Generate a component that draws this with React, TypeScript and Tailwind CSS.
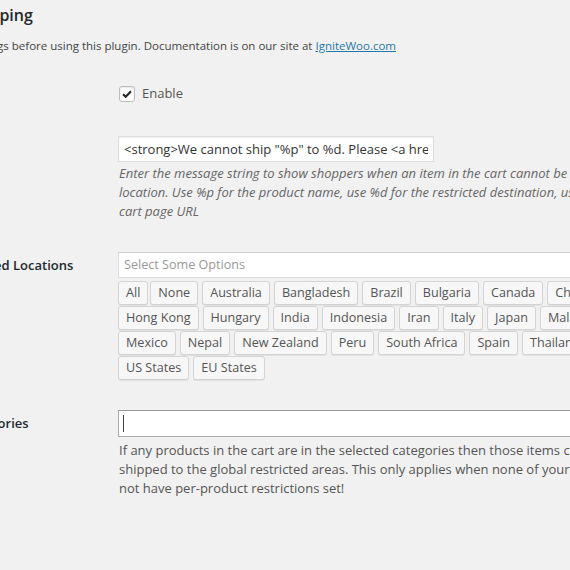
import { FC } from "react";

const rows: string[][] = [
  ["Australia", "Bangladesh", "Brazil", "Bulgaria", "Canada", "China", "France"],
  ["Hong Kong", "Hungary", "India", "Indonesia", "Iran", "Italy", "Japan", "Malaysia"],
  ["Mexico", "Nepal", "New Zealand", "Peru", "South Africa", "Spain", "Thailand", "Turkey"],
  ["US States", "EU States"],
];

const Chip: FC<{ label: string }> = ({ label }) => (
  <button className="h-[24px] shrink-0 px-[7px] border border-[#d4d4d4] rounded-[3px] bg-[#f7f7f7] shadow-[0_1px_0_#e0e0e0] text-[12.6px] leading-[22px] text-[#555] whitespace-nowrap">
    {label}
  </button>
);

const App: FC = () => {
  return (
    <div className="w-[570px] h-[570px] overflow-hidden bg-[#f1f1f1] font-['Open_Sans',sans-serif] text-[13px] text-[#444]">
      <h2 className="pt-[3px] -ml-[34px] text-[16px] leading-[24px] font-semibold text-[#23282d] whitespace-nowrap">
        Shipping
      </h2>
      <p className="mt-[9px] -ml-[121px] text-[11.5px] leading-[20px] whitespace-nowrap">
        Configure these settings before using this plugin. Documentation is on our site at{" "}
        <a className="text-[#1e78aa] underline">IgniteWoo.com</a>
      </p>

      {/* enable */}
      <div className="mt-[28px] flex h-[20px] items-center">
        <div className="w-[119px] shrink-0" />
        <label className="flex items-center gap-[7px] text-[13px] text-[#555]">
          <span className="flex h-[16px] w-[16px] items-center justify-center rounded-[3px] border border-[#bbb] bg-white shadow-[inset_0_1px_2px_rgba(0,0,0,0.1)]">
            <svg width="12" height="12" viewBox="0 0 12 12">
              <path d="M2 6.2 L4.7 8.8 L10 3.2" fill="none" stroke="#222" strokeWidth="2" />
            </svg>
          </span>
          Enable
        </label>
      </div>

      {/* message */}
      <div className="mt-[32px] flex">
        <div className="w-[118px] shrink-0" />
        <div>
          <input
            readOnly
            value={'<strong>We cannot ship "%p" to %d. Please <a href="%s">edit your cart</a></strong>'}
            className="block h-[26px] w-[316px] border border-[#ddd] bg-white px-[5px] text-[13px] text-[#333] shadow-[inset_0_1px_2px_rgba(0,0,0,0.07)] outline-none font-['Open_Sans',sans-serif]"
          />
          <div className="mt-[2px] ml-[1px] text-[13px] italic leading-[19px] text-[#666] whitespace-nowrap">
            <div>Enter the message string to show shoppers when an item in the cart cannot be shipped to their</div>
            <div>location. Use %p for the product name, use %d for the restricted destination, use %s for the</div>
            <div>cart page URL</div>
          </div>
        </div>
      </div>

      {/* locations */}
      <div className="mt-[31px] flex">
        <div className="w-[118px] shrink-0">
          <span className="block -ml-[54px] whitespace-nowrap text-[13px] font-semibold leading-[26px] text-[#23282d]">
            Restricted Locations
          </span>
        </div>
        <div className="min-w-0 flex-1">
          <div className="h-[26px] w-[520px] border border-[#ddd] border-t-[#ccc] bg-white px-[5px] text-[12.6px] leading-[24px] text-[#999]">
            Select Some Options
          </div>
          <div className="mt-[3px] flex flex-col gap-y-[1px]">
            <div className="flex gap-x-[4px]">
              <div className="flex gap-x-[2px]">
                <Chip label="All" />
                <Chip label="None" />
              </div>
              {rows[0].map((c) => (
                <Chip key={c} label={c} />
              ))}
            </div>
            {rows.slice(1).map((r, i) => (
              <div key={i} className="flex gap-x-[4px]">
                {r.map((c) => (
                  <Chip key={c} label={c} />
                ))}
              </div>
            ))}
          </div>
        </div>
      </div>

      {/* categories */}
      <div className="mt-[30px] flex">
        <div className="w-[118px] shrink-0">
          <span className="block -ml-[38px] whitespace-nowrap text-[13px] font-semibold leading-[27px] text-[#23282d]">
            Categories
          </span>
        </div>
        <div className="min-w-0 flex-1">
          <div className="flex h-[27px] w-[520px] items-center border border-[#aaa] border-t-[#999] bg-white px-[4px]">
            <span className="h-[17px] w-px bg-[#444]" />
          </div>
          <div className="mt-[4px] ml-[1px] text-[13px] leading-[19px] text-[#555] whitespace-nowrap">
            <div>If any products in the cart are in the selected categories then those items can not be</div>
            <div>shipped to the global restricted areas. This only applies when none of your products</div>
            <div>not have per-product restrictions set!</div>
          </div>
        </div>
      </div>
    </div>
  );
};

export default App;
